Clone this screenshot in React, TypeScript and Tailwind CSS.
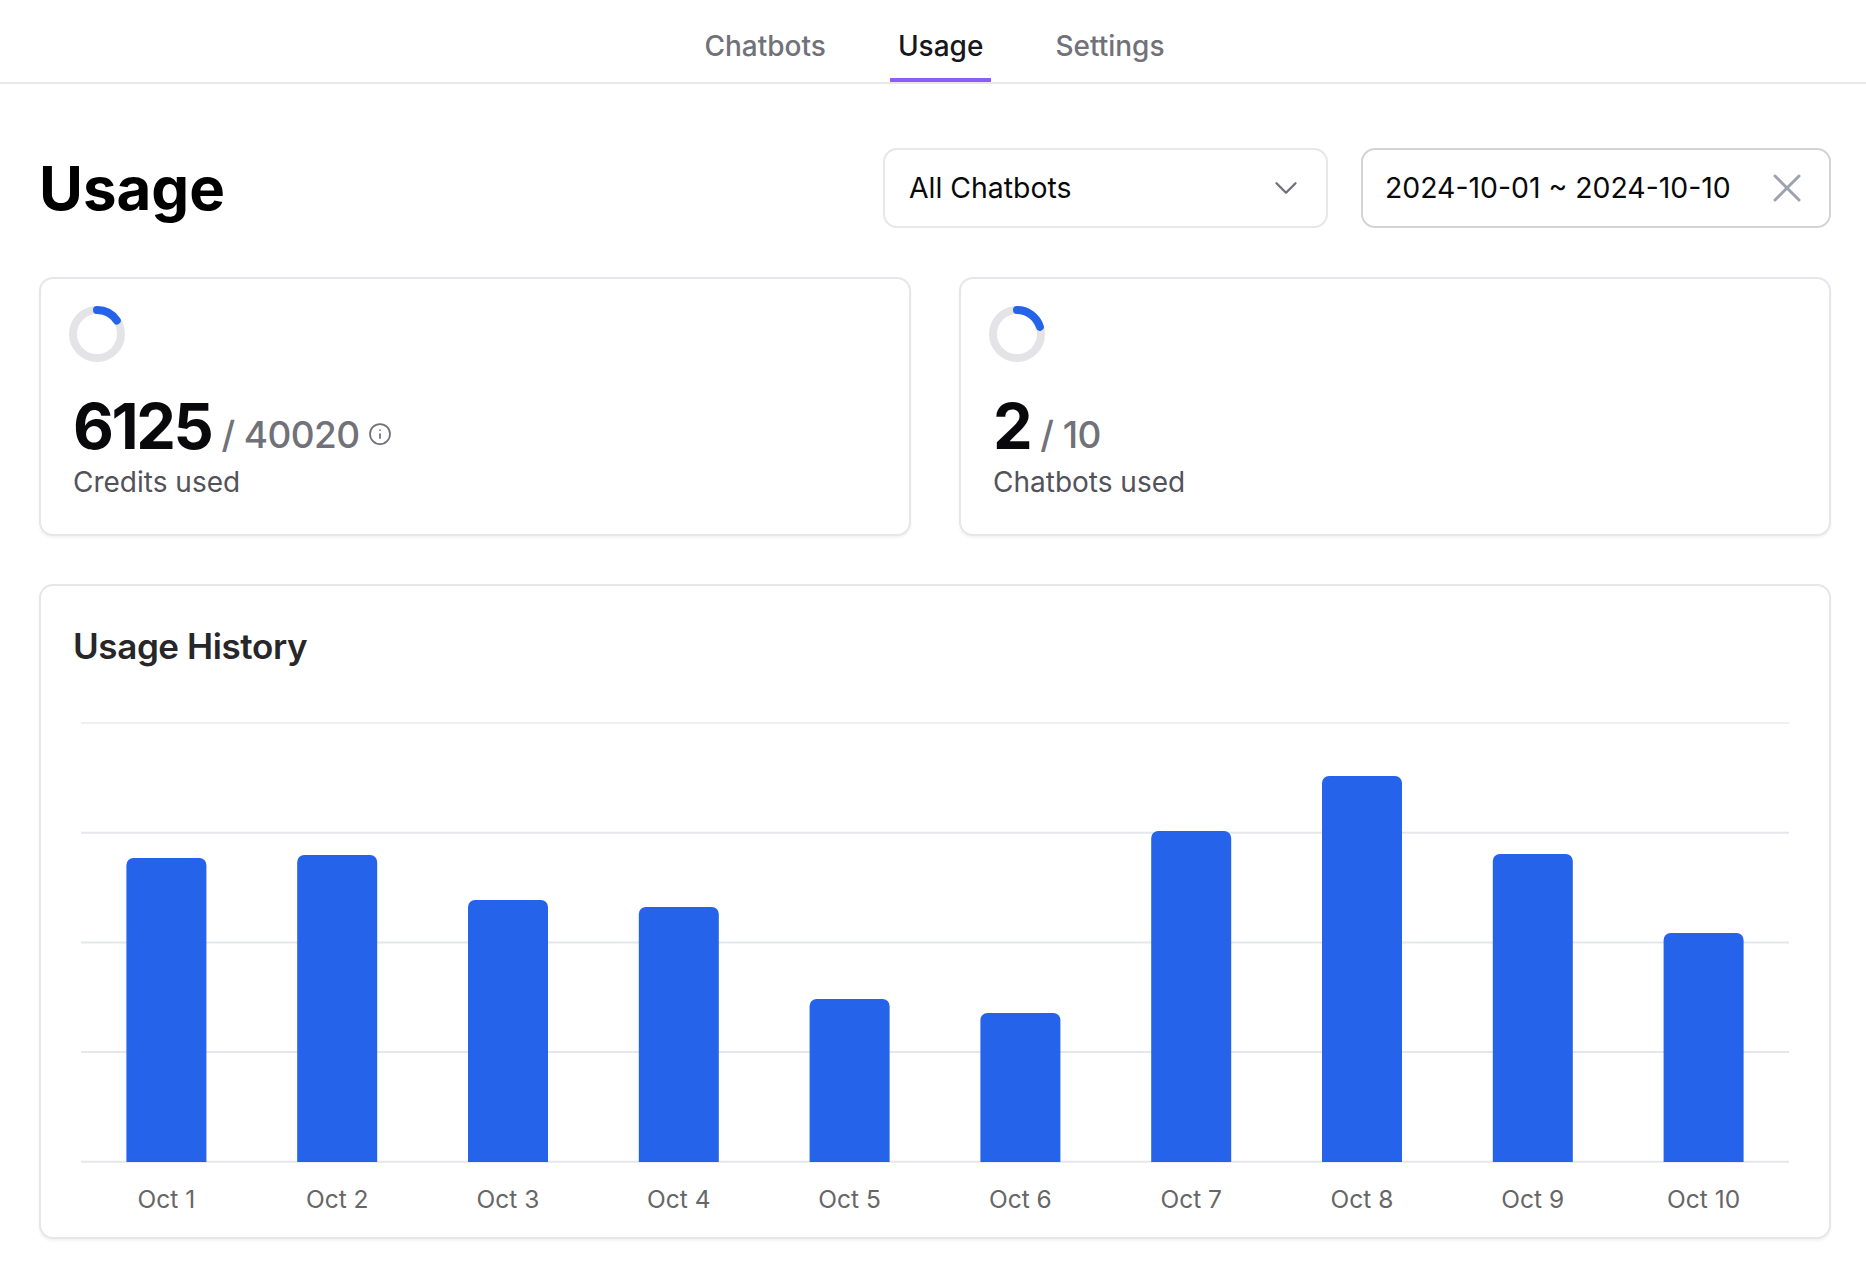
import { ChevronDown, Info, X } from 'lucide-react';

const bars = [
  { label: 'Oct 1', top: 858 },
  { label: 'Oct 2', top: 855 },
  { label: 'Oct 3', top: 900 },
  { label: 'Oct 4', top: 907 },
  { label: 'Oct 5', top: 999 },
  { label: 'Oct 6', top: 1013 },
  { label: 'Oct 7', top: 831 },
  { label: 'Oct 8', top: 776 },
  { label: 'Oct 9', top: 854 },
  { label: 'Oct 10', top: 933 },
];

const CHART_TOP = 722;
const CHART_BOTTOM = 1162;

function Ring({ percent }: { percent: number }) {
  const r = 24;
  const c = 2 * Math.PI * r;
  return (
    <svg width="56" height="56" viewBox="0 0 56 56" className="-rotate-90 -ml-[4px] block">
      <circle cx="28" cy="28" r={r} fill="none" stroke="#e4e4e7" strokeWidth="8" />
      <circle
        cx="28"
        cy="28"
        r={r}
        fill="none"
        stroke="#2563eb"
        strokeWidth="8"
        strokeLinecap="round"
        strokeDasharray={`${(c * percent) / 100} ${c}`}
      />
    </svg>
  );
}

function StatCard({ value, total, label, percent, info }: { value: string; total: string; label: string; percent: number; info?: boolean }) {
  return (
    <div className="h-[259px] rounded-[14px] border-2 border-[#e5e7eb] bg-white px-[32px] pt-[27px] shadow-[0_2px_3px_rgba(0,0,0,0.05)]">
      <Ring percent={percent} />
      <div className="mt-[29px] flex items-baseline">
        <span className="text-[63px] leading-[70px] font-bold tracking-[-2.4px] text-[#09090b]">{value}</span>
        <span className="ml-[10px] -translate-y-[1px] text-[37px] leading-[50px] font-medium tracking-[-0.6px] text-[#71717a]">/ {total}</span>
        {info && <Info className="ml-[8px] mt-[15px] self-center text-[#71717a]" size={24} strokeWidth={1.75} />}
      </div>
      <div className="text-[28px] leading-[42px] text-[#52525b]">{label}</div>
    </div>
  );
}

export default function App() {
  return (
    <div className="min-h-[1270px] bg-white font-['Inter',sans-serif]">
      <nav className="flex h-[84px] justify-center gap-[56px] border-b-2 border-[#e5e7eb] pl-[3px]">
        <a className="flex h-[82px] items-center px-2 pt-[14px] pb-[4px] text-[28px] font-medium text-[#71717a]">Chatbots</a>
        <a className="flex h-[82px] items-center rounded-b-none border-b-[4px] border-[#8b5cf6] px-2 pt-[14px] text-[28px] font-medium text-[#18181b]">Usage</a>
        <a className="flex h-[82px] items-center px-2 pt-[14px] pb-[4px] text-[28px] font-medium text-[#71717a]">Settings</a>
      </nav>

      <main className="pt-[64px] pr-[35px] pl-[39px]">
        <div className="flex h-[80px] items-center">
          <h1 className="text-[60px] font-bold text-black">Usage</h1>
          <div className="ml-auto flex h-full w-[445px] items-center justify-between rounded-[14px] border-2 border-[#e5e7eb] bg-white pr-[21px] pl-[24px] text-[28.4px] text-[#09090b]">
            All Chatbots
            <ChevronDown className="text-[#71717a]" size={38} strokeWidth={1.5} />
          </div>
          <div className="ml-[33px] flex h-full w-[470px] items-center justify-between rounded-[14px] border-2 border-[#d4d4d8] bg-white pr-[18px] pl-[22px] text-[28.4px] text-[#09090b]">
            2024-10-01 ~ 2024-10-10
            <X className="text-[#9ca3af]" size={48} strokeWidth={1.5} />
          </div>
        </div>

        <div className="mt-[49px] grid grid-cols-2 gap-[48px]">
          <StatCard value="6125" total="40020" label="Credits used" percent={15.3} info />
          <StatCard value="2" total="10" label="Chatbots used" percent={20} />
        </div>

        <section className="mt-[48px] h-[655px] rounded-[14px] border-2 border-[#e5e7eb] bg-white px-[32px] pt-[34px] shadow-[0_2px_3px_rgba(0,0,0,0.05)]">
          <h2 className="text-[35px] leading-[52px] font-semibold tracking-[-0.4px] text-[#27272a]">Usage History</h2>
          <svg width="1708" height="442" viewBox="0 0 1708 442" className="mt-[50px] ml-[8px] block">
            {[0, 1, 2, 3, 4].map((i) => (
              <line key={i} x1="0" x2="1708" y1={1 + i * 109.7} y2={1 + i * 109.7} stroke={i === 0 ? '#f0f0f2' : '#e5e7eb'} strokeWidth="2" />
            ))}
            {bars.map((b, i) => {
              const x = 45.4 + i * 170.8;
              const y = b.top - CHART_TOP;
              const h = CHART_BOTTOM - b.top;
              return (
                <path
                  key={b.label}
                  d={`M${x} ${y + h}V${y + 7}a7 7 0 0 1 7 -7H${x + 73}a7 7 0 0 1 7 7V${y + h}Z`}
                  fill="#2563eb"
                />
              );
            })}
          </svg>
          <div className="mt-[17px] ml-[8px] grid w-[1708px] grid-cols-10">
            {bars.map((b) => (
              <div key={b.label} className="text-center text-[24.5px] leading-[36px] text-[#666666]">{b.label}</div>
            ))}
          </div>
        </section>
      </main>
    </div>
  );
}
